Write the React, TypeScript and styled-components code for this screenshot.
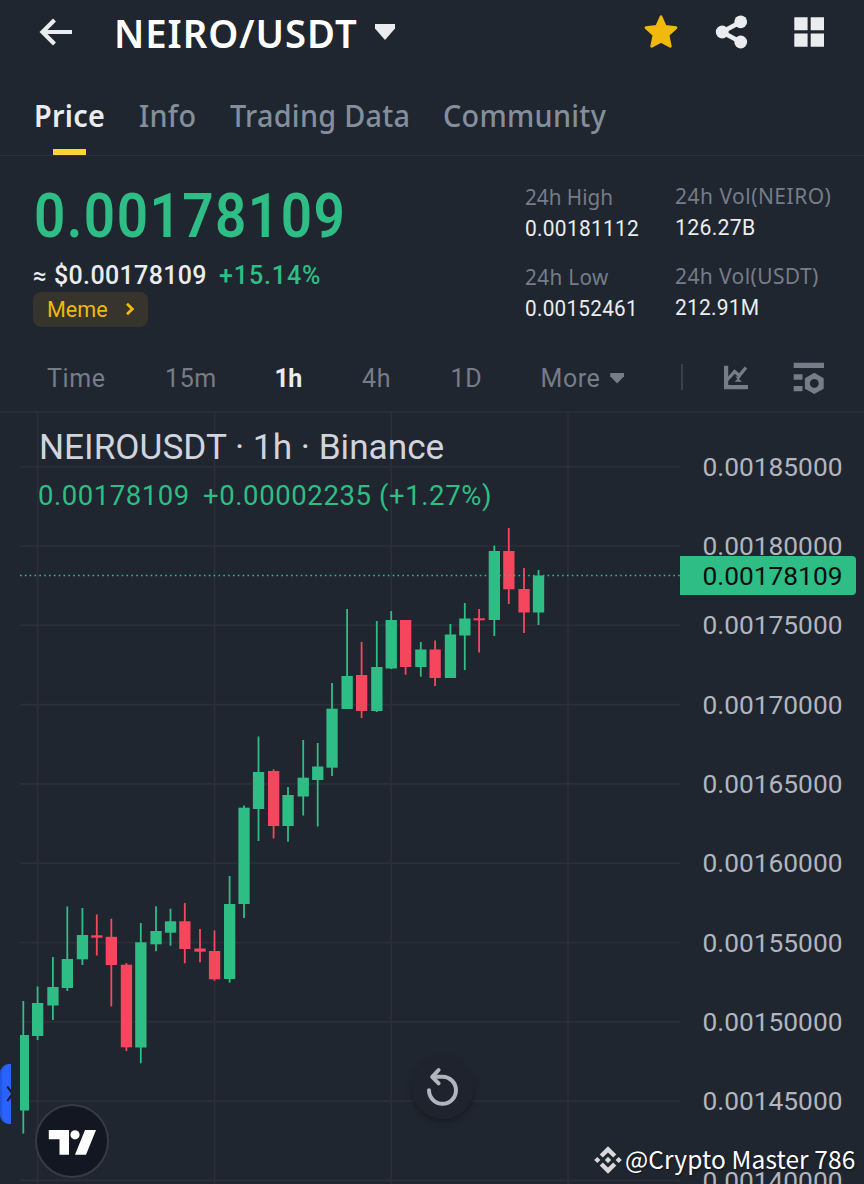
import React from "react";
import styled, { createGlobalStyle } from "styled-components";

const C = {
  bg: "#20262f",
  line: "#2a2f38",
  text: "#eaecef",
  muted: "#848e9c",
  dim: "#767c88",
  green: "#2ebd85",
  red: "#f6465d",
  gold: "#f0b90b",
};

const Global = createGlobalStyle`
  * { box-sizing: border-box; }
  body { margin: 0; background: ${C.bg}; }
`;

const plex = `"Noto Sans", "Open Sans", sans-serif`;
const roboto = `Roboto, "Liberation Sans", sans-serif`;

const Screen = styled.div`
  position: relative;
  display: flex;
  flex-direction: column;
  width: 864px;
  height: 1184px;
  overflow: hidden;
  background: ${C.bg};
  color: ${C.text};
  font-family: ${roboto};
`;

/* Single-line text; $sx condenses the face horizontally. */
const Text = styled.span<{
  $size: number;
  $w?: number;
  $color?: string;
  $ls?: number;
  $sx?: number;
  $font?: string;
}>`
  display: inline-block;
  white-space: nowrap;
  transform-origin: 0 50%;
  font-family: ${(p) => p.$font ?? roboto};
  font-size: ${(p) => p.$size}px;
  font-weight: ${(p) => p.$w ?? 400};
  color: ${(p) => p.$color ?? C.text};
  letter-spacing: ${(p) => p.$ls ?? 0}px;
  transform: ${(p) => (p.$sx ? `scaleX(${p.$sx})` : "none")};
`;

const Header = styled.header`
  display: flex;
  align-items: center;
  flex: none;
  height: 66px;
  padding: 0 39px 0 38px;
  line-height: 66px;
  > svg { margin-bottom: 2px; }
`;

const Pair = styled.div`
  display: flex;
  align-items: center;
  width: 260px;
  margin-left: 40px;
`;

const HeaderIcons = styled.div`
  display: flex;
  align-items: center;
  gap: 35px;
  margin-left: auto;
  padding-bottom: 2px;
  svg { display: block; }
  svg:last-child { margin-left: 8px; }
`;

const Tabs = styled.nav`
  display: flex;
  flex: none;
  height: 90px;
  padding: 30px 0 0 34px;
  border-bottom: 1px solid #2b3039;
`;

const Tab = styled.div<{ $width: number }>`
  display: flex;
  flex-direction: column;
  gap: 13px;
  flex: none;
  width: ${(p) => p.$width}px;
  line-height: 40px;
`;

const TabMark = styled.div`
  width: 33px;
  height: 6.5px;
  margin-left: 19px;
  background: #fcd535;
`;

const Ticker = styled.section`
  display: flex;
  flex: none;
  height: 190px;
  padding: 29.5px 0 0 33px;
`;

const PriceColumn = styled.div`
  display: flex;
  flex-direction: column;
  width: 492px;
`;

const BigPrice = styled.div`
  height: 60px;
  padding-left: 1px;
  line-height: 60px;
`;

const SubPrice = styled.div`
  display: flex;
  margin-top: 15px;
  height: 31px;
  line-height: 30px;
  > span { height: 30px; }
`;

const Slot = styled.div<{ $width: number }>`
  display: flex;
  align-items: flex-start;
  flex: none;
  width: ${(p) => p.$width}px;
`;

const IntervalSlot = styled(Slot)`
  align-items: center;
`;

const Tag = styled.div`
  display: flex;
  align-items: center;
  justify-content: space-between;
  width: 115px;
  height: 35px;
  padding: 0 13px 0 14px;
  border-radius: 8px;
  background: #36342c;
  line-height: 35px;
`;

const StatColumn = styled.div<{ $lift?: number }>`
  width: 150px;
  margin-top: ${(p) => -5 - (p.$lift ?? 0)}px;
`;

const Stat = styled.div`
  display: flex;
  flex-direction: column;
  align-items: flex-start;
  gap: 1px;
  height: 80px;
  line-height: 31.5px;
`;

const Intervals = styled.div`
  display: flex;
  align-items: center;
  flex: none;
  height: 67px;
  padding-left: 47px;
  border-bottom: 2px solid #272c35;
  line-height: 67px;
`;

const Divider = styled.div`
  width: 1.5px;
  height: 26px;
  margin: 0 41px 3px 0;
  background: #3a404b;
`;

const Tool = styled.div<{ $width: number }>`
  width: ${(p) => p.$width}px;
  margin: 0 1px 2px -1px;
  svg { display: block; }
`;

const Chart = styled.section`
  position: relative;
  display: flex;
  flex: none;
  height: 772px;
  margin-top: -1px;
  > svg { display: block; flex: none; }
`;

const Legend = styled.div`
  position: absolute;
  left: 39px;
  top: 11px;
  display: flex;
  flex-direction: column;
`;

const LegendTitle = styled.div`
  height: 49px;
  line-height: 49px;
`;

const LegendValues = styled.div`
  display: flex;
  height: 48px;
  margin-left: -1px;
  line-height: 48px;
`;

const Axis = styled.div`
  width: 184px;
  padding: 15.7px 0 0 22.5px;
`;

const AxisLabel = styled.div`
  height: 79.35px;
  line-height: 79.35px;
`;

const PriceTag = styled.div`
  position: absolute;
  left: 680px;
  top: 144px;
  width: 176px;
  height: 39px;
  padding-left: 22.5px;
  border-radius: 0 4px 4px 0;
  background: ${C.green};
  line-height: 40px;
`;

const ResetButton = styled.div`
  position: absolute;
  left: 412px;
  top: 645px;
  display: grid;
  place-items: center;
  width: 62px;
  height: 62px;
  border-radius: 50%;
  background: #1f232d;
  box-shadow: 0 3px 6px rgba(10, 12, 18, 0.4);
`;

const BrandBadge = styled.div`
  position: absolute;
  left: 35px;
  top: 692px;
  width: 74px;
  height: 74px;
  border: 2px solid #363a45;
  border-radius: 50%;
  background: #131722;
  svg { display: block; }
`;

const Drawer = styled.div`
  position: absolute;
  left: 0;
  top: 652px;
  width: 11px;
  height: 60px;
  overflow: hidden;
  border-left: 2px solid #2157e0;
  border-radius: 9px 0 0 9px;
  background: #2962ff;
  svg { display: block; }
`;

const Watermark = styled.div`
  position: absolute;
  left: 594px;
  top: 1142px;
  display: flex;
  align-items: center;
  gap: 3px;
  height: 36px;
  line-height: 36px;
  text-shadow: 1px 1px 2px rgba(0, 0, 0, 0.5);
  > span { margin-top: -2px; }
`;

/* x centre, high, low, body top, body bottom, rising */
type Candle = [number, number, number, number, number, 0 | 1];
const candles: Candle[] = [
  [23.3, 1001, 1133.5, 1035, 1110.5, 1],
  [37.6, 986.5, 1040, 1003, 1036, 1],
  [52.9, 957, 1020, 987, 1005.5, 1],
  [67.3, 906.5, 991, 959, 988, 1],
  [82.4, 908, 965, 935, 959.3, 1],
  [96.8, 914.5, 955.5, 935.3, 937.7, 0],
  [111.3, 918.7, 1006.5, 936.8, 965, 0],
  [126.4, 963, 1051, 964.7, 1047.3, 0],
  [140.8, 923, 1063.3, 942.3, 1047.5, 1],
  [156, 906.3, 951.3, 931, 944.3, 1],
  [170.5, 908.7, 945.7, 921.3, 932.7, 1],
  [184.8, 903, 963.3, 921.3, 949, 0],
  [200, 929, 962.3, 948.5, 951.7, 0],
  [214.5, 930.5, 980.7, 951, 979.3, 0],
  [229.6, 876, 982.7, 904, 979, 1],
  [244, 805.5, 918, 807.7, 904, 1],
  [258.5, 736.5, 841, 772, 809, 1],
  [273.6, 769.3, 838.5, 771, 826, 0],
  [288, 787, 841.7, 795, 826, 1],
  [303.2, 740, 815.5, 777.7, 796.5, 1],
  [317.7, 743, 826.5, 766.5, 780, 1],
  [332, 683, 776, 708.7, 767.7, 1],
  [347.1, 609, 709, 676, 709, 1],
  [361.6, 642, 718, 675, 711, 0],
  [376.8, 621, 712, 667, 711, 1],
  [391.2, 611, 669, 620, 668.5, 1],
  [405.6, 620, 674.7, 620, 667, 0],
  [420.8, 642, 676.7, 649.5, 667, 1],
  [435.1, 640.5, 686, 649.5, 678, 0],
  [450.4, 624, 678, 634.5, 678, 1],
  [464.8, 603, 670, 618.5, 635.5, 1],
  [479.1, 609, 652.5, 618.3, 620.3, 0],
  [494.3, 545.5, 636, 551, 620, 1],
  [508.8, 528, 604, 551, 589.3, 0],
  [524, 568, 633, 589, 612.5, 0],
  [538.5, 570, 625, 575.5, 612.5, 1],
];

const axisValues = [
  "0.00185000", "0.00180000", "0.00175000", "0.00170000", "0.00165000",
  "0.00160000", "0.00155000", "0.00150000", "0.00145000", "0.00140000",
];

const intervals = [
  { label: "Time", width: 118 },
  { label: "15m", width: 109.5 },
  { label: "1h", width: 87.5, active: true },
  { label: "4h", width: 88.5 },
  { label: "1D", width: 90 },
];

const tabs = [
  { label: "Price", width: 104.5 },
  { label: "Info", width: 91.5 },
  { label: "Trading Data", width: 212.5 },
  { label: "Community", width: 180 },
];

const Candles = () => (
  <svg width="680" height="772" viewBox="0 412 680 772">
    <g stroke={C.line} strokeWidth="1.6">
      {axisValues.map((v, i) => {
        const y = 466.7 + i * 79.3;
        return <line key={v} x1="20" x2="680" y1={y} y2={y} />;
      })}
      {[37.6, 214.5, 391.2, 568].map((x) => (
        <line key={x} x1={x} x2={x} y1="412" y2="1184" />
      ))}
    </g>
    {candles.map(([x, high, low, top, bottom, up], i) => (
      <g key={x} fill={up ? C.green : C.red}>
        <rect x={x - 0.9} y={high} width="1.8" height={low - high} />
        <rect
          x={i === 0 ? 20 : x - 5.6}
          y={top}
          width={i === 0 ? 9 : 11.3}
          height={bottom - top}
        />
      </g>
    ))}
    <line x1="20" x2="680" y1="575.5" y2="575.5" stroke={C.green} strokeWidth="1.6" strokeDasharray="1.6 3.24" />
    <line x1="503.2" x2="514.4" y1="575.5" y2="575.5" stroke="#a08070" strokeWidth="1.6" strokeDasharray="1.6 3.24" strokeDashoffset="4.1" />
  </svg>
);

export default function App() {
  return (
    <Screen>
      <Global />
      <Header>
        <svg width="36" height="30" viewBox="38 17 36 30" fill="none" stroke={C.text} strokeWidth="4.2">
          <path d="M72 32H43M54.5 20L42.5 32L54.5 44" />
        </svg>
        <Pair>
          <Text $size={39} $w={600} $color="#fff" $font={plex} $ls={1} $sx={0.98}>NEIRO/USDT</Text>
        </Pair>
        <svg width="22" height="18" viewBox="374 23 22 18">
          <path d="M375 24h20v4.5L385 40L375 28.5z" fill={C.text} />
        </svg>
        <HeaderIcons>
          <svg width="36" height="36" viewBox="643 14 36 36">
            <path
              d="M661 16.8L665.2 26.3L676 27.6L668 35L670.3 46.3L661 41.2L651.7 46.3L654 35L646 27.6L656.8 26.3Z"
              fill={C.gold}
              stroke={C.gold}
              strokeWidth="2.8"
              strokeLinejoin="round"
            />
          </svg>
          <svg width="36" height="36" viewBox="714 14 36 36" fill={C.text}>
            <path d="M740.7 22L722 32L740.7 42" fill="none" stroke={C.text} strokeWidth="4.6" />
            <circle cx="722.2" cy="32" r="6.4" />
            <circle cx="740.7" cy="21.8" r="6.4" />
            <circle cx="740.7" cy="42" r="6.4" />
          </svg>
          <svg width="32" height="32" viewBox="793 16 32 32" fill={C.text}>
            <path d="M794.3 17.2h13.3v13h-13.3zM810.7 17.2h13.3v13h-13.3zM794.3 33.6h13.3v13.2h-13.3zM810.7 33.6h13.3v13.2h-13.3z" />
          </svg>
        </HeaderIcons>
      </Header>

      <Tabs>
        {tabs.map((t, i) => (
          <Tab key={t.label} $width={t.width}>
            <Text
              $size={30}
              $w={i === 0 ? 600 : 500}
              $font={plex}
              $ls={0.3}
              $sx={0.96}
              $color={i === 0 ? C.text : C.muted}
            >
              {t.label}
            </Text>
            {i === 0 && <TabMark />}
          </Tab>
        ))}
      </Tabs>

      <Ticker>
        <PriceColumn>
          <BigPrice>
            <Text $size={61.5} $w={600} $color={C.green} $ls={1.6} $sx={0.893}>0.00178109</Text>
          </BigPrice>
          <SubPrice>
            <Slot $width={21}><Text $size={24} $w={500}>≈</Text></Slot>
            <Slot $width={165}><Text $size={25} $w={500} $ls={0.35}>$0.00178109</Text></Slot>
            <Text $size={25} $w={500} $color={C.green} $ls={0.9}>+15.14%</Text>
          </SubPrice>
          <Tag>
            <Text $size={22} $color={C.gold} $sx={0.98}>Meme</Text>
            <svg width="10" height="14" viewBox="125 302 10 14" fill="none" stroke={C.gold} strokeWidth="2.8">
              <path d="M127 303.8L132.3 309L127 314.2" />
            </svg>
          </Tag>
        </PriceColumn>
        <StatColumn>
          <Stat>
            <Text $size={22} $color={C.dim} $font={plex} $sx={0.94}>24h High</Text>
            <Text $size={22} $ls={0.3} $sx={0.95}>0.00181112</Text>
          </Stat>
          <Stat>
            <Text $size={22} $color={C.dim} $font={plex} $ls={0.4} $sx={0.94}>24h Low</Text>
            <Text $size={22} $ls={0.3} $sx={0.94}>0.00152461</Text>
          </Stat>
        </StatColumn>
        <StatColumn $lift={1}>
          <Stat>
            <Text $size={22} $color={C.dim} $font={plex} $ls={0.5} $sx={0.955}>24h Vol(NEIRO)</Text>
            <Text $size={22} $ls={0.3} $sx={0.965}>126.27B</Text>
          </Stat>
          <Stat>
            <Text $size={22} $color={C.dim} $font={plex} $ls={0.4} $sx={0.955}>24h Vol(USDT)</Text>
            <Text $size={22} $ls={0.2} $sx={0.955}>212.91M</Text>
          </Stat>
        </StatColumn>
      </Ticker>

      <Intervals>
        {intervals.map((t) => (
          <IntervalSlot key={t.label} $width={t.width}>
            <Text $size={25} $w={t.active ? 700 : 400} $color={t.active ? C.text : C.dim} $ls={t.active ? -0.5 : 0.6}>
              {t.label}
            </Text>
          </IntervalSlot>
        ))}
        <IntervalSlot $width={69}><Text $size={25} $color={C.dim} $ls={0.6}>More</Text></IntervalSlot>
        <IntervalSlot $width={71.5}>
          <svg width="15" height="12" viewBox="609.5 373 15 12">
            <path d="M609.7 373h13.8v3.2L616.6 383.4L609.7 376.2z" fill={C.dim} />
          </svg>
        </IntervalSlot>
        <Divider />
        <Tool $width={70}>
          <svg width="26" height="26" viewBox="723 365 26 26">
            <path d="M726.1 365.7V387.2H748" fill="none" stroke={C.dim} strokeWidth="4.2" />
            <path d="M727 380L734.7 371.6L739.3 375.6L746 367.5" fill="none" stroke={C.dim} strokeWidth="3.2" />
            <path d="M735.5 376.5H741L738.9 379L742 381.8H734.4L737.5 379z" fill={C.dim} />
          </svg>
        </Tool>
        <Tool $width={32}>
          <svg width="32" height="34" viewBox="793 361 32 34" fill={C.dim}>
            <path d="M793.7 362.7H824V368H793.7zM793.7 374.3H802.5V379.7H793.7zM793.7 386H802.5V391.3H793.7z" />
            <path
              fillRule="evenodd"
              d="M814.3 372.8L823.7 378.2V388.7L814.3 394.1L804.9 388.7V378.2zM814.3 379a4.4 4.4 0 1 0 .01 0z"
            />
          </svg>
        </Tool>
      </Intervals>

      <Chart>
        <Candles />
        <Axis>
          {axisValues.map((v) => (
            <AxisLabel key={v}><Text $size={26.3} $color="#b2b5be">{v}</Text></AxisLabel>
          ))}
        </Axis>
        <PriceTag><Text $size={26.3} $color="#0b0e11">0.00178109</Text></PriceTag>
        <Legend>
          <LegendTitle><Text $size={35.2} $color="#d1d4dc">NEIROUSDT · 1h · Binance</Text></LegendTitle>
          <LegendValues>
            <Slot $width={165}><Text $size={27.5} $color={C.green} $ls={0.55}>0.00178109</Text></Slot>
            <Text $size={27.5} $color={C.green} $ls={0.6}>+0.00002235 (+1.27%)</Text>
          </LegendValues>
        </Legend>
        <Drawer>
          <svg width="9" height="60" viewBox="2 1064 9 60" fill="none" stroke="#131722" strokeWidth="2">
            <path d="M7.3 1086.5L12.5 1094L7.3 1101" />
          </svg>
        </Drawer>
        <BrandBadge>
          <svg width="70" height="70" viewBox="37 1106 70 70" fill="#fff">
            <path d="M48.8 1130H69V1154.7H59.5V1139.3H48.8z" />
            <circle cx="75" cy="1134.8" r="4.6" />
            <path d="M85 1130H96L86 1154.7H75z" />
          </svg>
        </BrandBadge>
        <ResetButton>
          <svg width="34" height="42" viewBox="426 1067 34 42" fill="none" stroke="#b2b5be" strokeWidth="4" strokeLinecap="round" strokeLinejoin="round">
            <path d="M429 1090.3A13.5 13.5 0 1 0 442.5 1076.8H433" />
            <path d="M438.6 1070L432.2 1076.8L438.6 1083.3" />
          </svg>
        </ResetButton>
      </Chart>

      <Watermark>
        <svg width="28" height="28" viewBox="-14 -14 28 28" fill="#d9d9d9">
          <path d="M0-13.8L8.3-5.5L5.2-2.4L0-7.6L-5.2-2.4L-8.3-5.5zM0 13.8L8.3 5.5L5.2 2.4L0 7.6L-5.2 2.4L-8.3 5.5zM0-3.2L3.2 0L0 3.2L-3.2 0zM-10.7-3.1L-7.6 0L-10.7 3.1L-13.8 0zM10.7-3.1L13.8 0L10.7 3.1L7.6 0z" />
        </svg>
        <Text $size={24.5} $color="#fff" $ls={0.1} $font={`"Noto Sans CJK SC", sans-serif`}>@Crypto Master 786</Text>
      </Watermark>
    </Screen>
  );
}
